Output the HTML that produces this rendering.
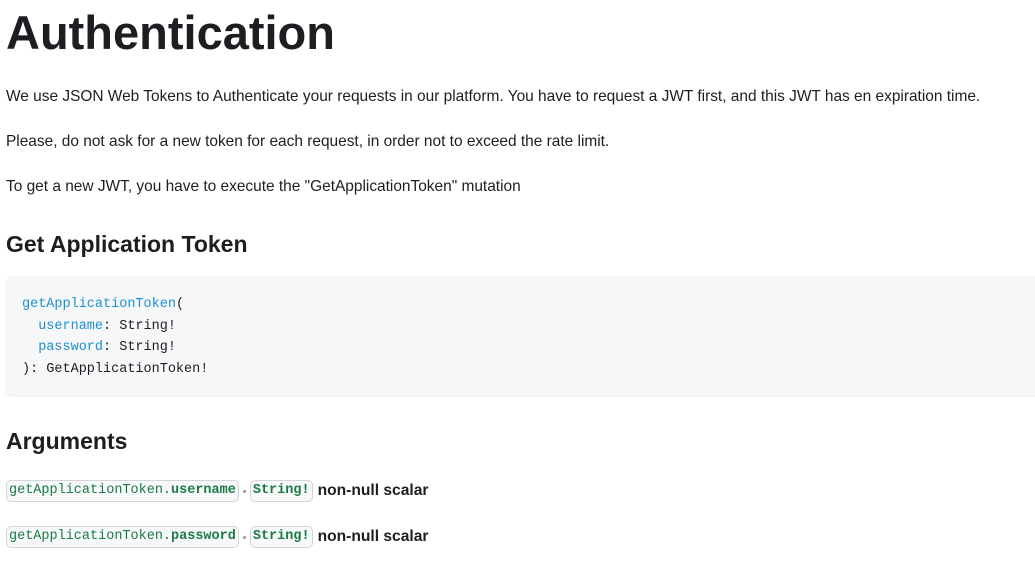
<!DOCTYPE html>
<html><head><style>
body{margin:0;width:1035px;height:562px;overflow:hidden;background:#fff;color:#1c1e21;font-family:"Liberation Sans",sans-serif;position:relative}
.a{position:absolute;left:6px;margin:0;white-space:nowrap}
h1{font-size:47px;font-weight:bold;top:5px;line-height:56px}
p{font-size:15.45px;line-height:20px}
h2{font-size:23px;font-weight:bold;line-height:30px}
.code{position:absolute;left:6px;top:276px;width:1040px;height:119px;background:#f6f7f9;border-radius:6px;box-shadow:0 1px 2px rgba(0,0,0,.08)}
pre{position:absolute;left:22px;top:294px;margin:0;font-family:"Liberation Mono",monospace;font-size:13.5px;line-height:21.6px;color:#1c1e21}
.b{color:#1f8fcf}
.row{position:absolute;left:6px;display:flex;align-items:center;white-space:nowrap}
.chip{font-family:"Liberation Mono",monospace;font-size:13.5px;color:#1b7a45;background:#f6f8fa;border:1px solid #d3d5d8;border-radius:5px;padding:1px 2px;line-height:18px}
.dot{width:3px;height:3px;border-radius:50%;background:#999;margin:0 4px}
.ns{font-weight:bold;font-size:15.6px;margin-left:5px}
</style></head><body>
<h1 class="a">Authentication</h1>
<p class="a" style="top:87px">We use JSON Web Tokens to Authenticate your requests in our platform. You have to request a JWT first, and this JWT has en expiration time.</p>
<p class="a" style="top:132px">Please, do not ask for a new token for each request, in order not to exceed the rate limit.</p>
<p class="a" style="top:177px">To get a new JWT, you have to execute the "GetApplicationToken" mutation</p>
<h2 class="a" style="top:229px">Get Application Token</h2>
<div class="code"></div>
<pre><span class="b">getApplicationToken</span>(
  <span class="b">username</span>: String!
  <span class="b">password</span>: String!
): GetApplicationToken!</pre>
<h2 class="a" style="top:426px">Arguments</h2>
<div class="row" style="top:480px"><span class="chip">getApplicationToken.<b>username</b></span><span class="dot"></span><span class="chip"><b>String!</b></span><span class="ns">non-null scalar</span></div>
<div class="row" style="top:526px"><span class="chip">getApplicationToken.<b>password</b></span><span class="dot"></span><span class="chip"><b>String!</b></span><span class="ns">non-null scalar</span></div>
</body></html>
